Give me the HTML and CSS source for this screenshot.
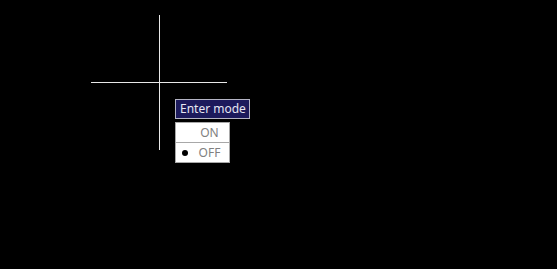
FILE: index.html
```html
<!DOCTYPE html>
<html>
<head>
<meta charset="utf-8">
<link rel="stylesheet" href="styles.css">
</head>
<body>
<div class="canvas">
  <div class="cross-v"></div>
  <div class="cross-h"></div>
  <div class="prompt">Enter mode</div>
  <div class="menu">
    <div class="item"><span class="mark"></span><span class="label">ON</span></div>
    <div class="item sel"><span class="mark"><span class="dot"></span></span><span class="label">OFF</span></div>
  </div>
</div>
</body>
</html>
```
FILE: styles.css
```css
html, body {
  margin: 0;
  padding: 0;
  background: #000;
}
.canvas {
  position: relative;
  width: 557px;
  height: 269px;
  background: #000;
  overflow: hidden;
  font-family: "Noto Sans", "Open Sans", sans-serif;
}
.cross-v {
  position: absolute;
  left: 159px;
  top: 15px;
  width: 1px;
  height: 135px;
  background: #e8e8e8;
}
.cross-h {
  position: absolute;
  left: 91px;
  top: 82px;
  width: 136px;
  height: 1px;
  background: #e8e8e8;
}
.prompt {
  position: absolute;
  left: 175px;
  top: 99px;
  height: 18px;
  width: 69px;
  border: 1px solid #b4b4c4;
  background: #1c1a5c;
  color: #e6e6f2;
  font-size: 12px;
  line-height: 18px;
  padding-left: 4px;
}
.menu {
  position: absolute;
  left: 175px;
  top: 122px;
  width: 53px;
  border: 1px solid #a8a8a8;
  background: #fff;
}
.item {
  display: flex;
  align-items: center;
  height: 19px;
  color: #808080;
  font-size: 12px;
}
.item + .item {
  border-top: 1px solid #a8a8a8;
}
.mark {
  width: 20px;
  display: flex;
  justify-content: center;
  align-items: center;
}
.dot {
  width: 6px;
  height: 6px;
  border-radius: 50%;
  background: #000;
  margin-left: -3px;
}
.label {
  flex: 1;
  text-align: center;
  padding-right: 6px;
}
```
